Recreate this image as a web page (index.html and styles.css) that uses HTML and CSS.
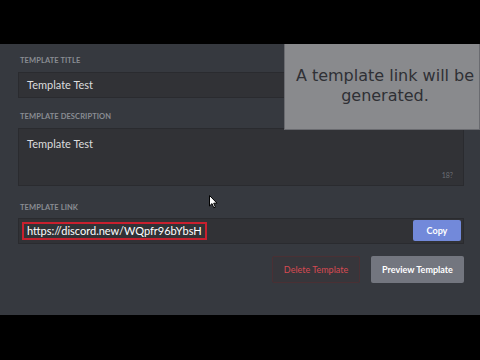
FILE: index.html
```html
<!DOCTYPE html>
<html lang="en">
<head>
  <meta charset="UTF-8" />
  <title>Server Template</title>
  <link rel="stylesheet" href="styles.css">
</head>
<body>
  <div class="bar"></div>

  <div class="panel">
    <!-- Titulo -->
    <div class="field first">
      <div class="label">Template Title</div>
      <div class="input">Template Test</div>
    </div>

    <!-- Descripcion -->
    <div class="field">
      <div class="label">Template Description</div>
      <div class="input area">
        <span>Template Test</span>
        <span class="count">18?</span>
      </div>
    </div>

    <!-- Link -->
    <div class="field link">
      <div class="label">Template Link</div>
      <div class="input row">
        <span class="url">https://discord.new/WQpfr96bYbsH</span>
        <button class="copy">Copy</button>
      </div>
    </div>

    <div class="actions">
      <button class="btn delete">Delete Template</button>
      <button class="btn preview">Preview Template</button>
    </div>

    <div class="note">A template link will be<br>generated.</div>

    <svg class="cursor" width="9" height="14" viewBox="0 0 9 14">
      <path d="M0.5 0.5 L0.5 11 L3 8.6 L4.8 12.8 L6.4 12.1 L4.7 8.2 L8 8.2 Z" fill="#fff" stroke="#000" stroke-width="1"/>
    </svg>
  </div>

  <div class="bar"></div>
</body>
</html>
```

FILE: styles.css
```css
body { margin: 0; background: #000; font-family: Lato, "Open Sans", sans-serif; }
.bar { height: 44px; background: #000; }
.bar:last-child { height: 45px; }
.panel { position: relative; height: 271px; background: #36393f; padding: 0 16px 0 18px; box-sizing: border-box; }

.field { margin-top: 14px; }
.field.first { padding-top: 12px; margin-top: 0; }
.field.link { margin-top: 17px; }
.label { font-size: 7.5px; font-weight: bold; text-transform: uppercase; color: #8a8d93; height: 9px; line-height: 9px; margin: 0 0 7px 2px; letter-spacing: 0.1px; }
.link .label { margin-bottom: 6px; }

.input { height: 26px; box-sizing: border-box; background: #313236; border: 1px solid #2a2b2f; color: #dcddde; font-size: 11px; padding: 0 8px; line-height: 24px; }
.input.area { height: 58px; padding-top: 3px; position: relative; }
.count { position: absolute; right: 10px; bottom: 6px; font-size: 7px; line-height: 8px; color: #6c6f75; }

.input.row { display: flex; align-items: center; justify-content: space-between; padding: 0 2px 0 3px; }
.url { border: 2px solid #c8202e; color: #fff; padding: 0 3px; line-height: 14px; height: 14px; }
.copy { width: 48px; height: 21px; margin-top: -1px; background: #7289da; color: #fff; border: 0; border-radius: 2px; font-family: inherit; font-weight: bold; font-size: 9px; padding: 0; }

.actions { display: flex; justify-content: flex-end; gap: 11px; margin-top: 12px; }
.btn { height: 27px; border: 0; border-radius: 2px; font-family: inherit; font-size: 9px; padding: 0; }
.delete { width: 88px; background: #37363b; color: #d84a52; border: 1px solid #4a3034; }
.preview { width: 93px; background: #73767f; color: #fff; font-weight: bold; }

.note { position: absolute; top: 0; left: 284px; right: 0; height: 86px; box-sizing: border-box; background: #898a8d; border: 1px solid #6a6b70; border-top: 0; color: #2f3035; font-family: "DejaVu Sans", sans-serif; font-size: 16px; line-height: 20px; text-align: center; padding: 22px 0 0 6px; white-space: nowrap; }
.cursor { position: absolute; left: 209px; top: 151px; }
```
